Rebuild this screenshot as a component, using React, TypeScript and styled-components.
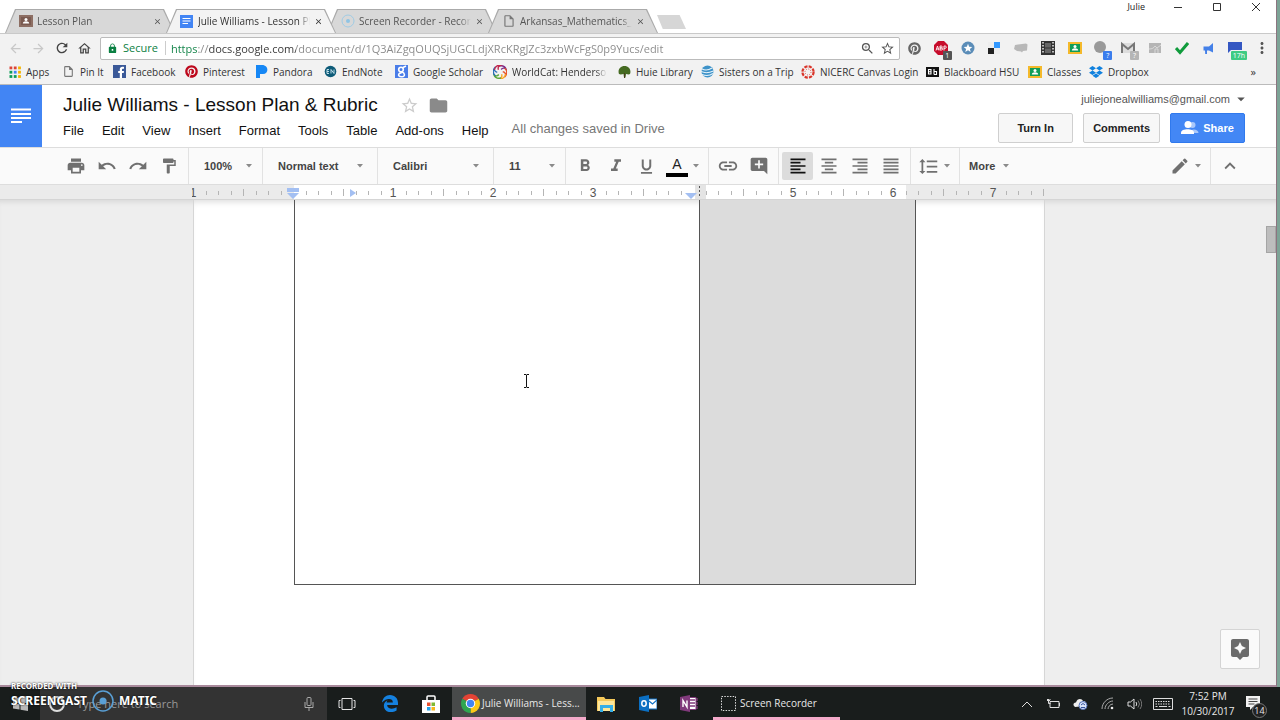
import React from "react";
import styled, { createGlobalStyle, css } from "styled-components";
import {
  MdAddComment, MdArrowDropDown, MdArrowBack, MdArrowForward, MdAssistant, MdClose,
  MdEdit, MdExpandLess, MdFolder, MdFormatAlignCenter, MdFormatAlignJustify, MdFormatAlignLeft,
  MdFormatAlignRight, MdFormatBold, MdFormatItalic, MdFormatLineSpacing, MdFormatPaint,
  MdFormatUnderlined, MdLink, MdLock, MdMoreVert, MdOutlineHome,
  MdOutlineInsertDriveFile, MdPrint, MdRedo, MdRefresh, MdStarBorder, MdUndo, MdZoomIn,
} from "react-icons/md";
import { FaDropbox, FaPinterest } from "react-icons/fa";

const ui = `"Open Sans", "Noto Sans", sans-serif`;
const arial = `"Liberation Sans", Arial, sans-serif`;

const GlobalStyle = createGlobalStyle`
  * { box-sizing: border-box; }
  body { margin: 0; background: #7da396; font-family: ${ui}; }
  button, input, select { font: inherit; color: inherit; margin: 0; padding: 0; border: 0; background: none; outline: none; }
  a { color: inherit; text-decoration: none; }
  svg { display: block; flex: none; }
`;

const Desktop = styled.div`
  position: relative;
  display: flex;
  flex-direction: column;
  min-height: 100vh;
`;
const Window = styled.div`
  flex: 1;
  display: flex;
  flex-direction: column;
  margin-right: 3px;
  border-right: 1px solid #8c7480;
  border-bottom: 2px solid #a98a9c;
  background: #fff;
`;

/* Tab strip */
const TabStrip = styled.div`
  display: flex;
  height: 33px;
  padding: 9px 0 0 5px;
`;
const Tabs = styled.div`
  display: flex;
  flex: 1;
`;
const slope = "polygon(10px 0, calc(100% - 11px) 0, 100% 100%, 0 100%)";
const TabBox = styled.div<{ $active?: boolean }>`
  position: relative;
  display: flex;
  align-items: center;
  gap: 4px;
  width: 170px;
  height: 24px;
  margin-right: -9px;
  padding: 0 13px 0 14px;
  background: #aaa;
  clip-path: ${slope};
  z-index: ${(p) => (p.$active ? 1 : 0)};
  color: ${(p) => (p.$active ? "#333" : "#555")};
  &::before {
    content: "";
    position: absolute;
    inset: 1px 1px 0 1px;
    clip-path: ${slope};
    background: ${(p) => (p.$active ? "#f3f3f3" : "#d8d8d8")};
  }
  > * { position: relative; }
`;
const TabTitle = styled.a`
  flex: 1;
  min-width: 0;
  overflow: hidden;
  white-space: nowrap;
  font-size: 10px;
  line-height: 16px;
  mask-image: linear-gradient(90deg, #000 90%, transparent);
`;
const CloseTab = styled.button`
  display: flex;
`;
const NewTab = styled.button`
  width: 29px;
  height: 14px;
  margin: 6px 0 0 8px;
  background: #d6d6d6;
  clip-path: polygon(0 0, 78% 0, 100% 100%, 20% 100%);
`;
const WindowControls = styled.div`
  display: flex;
  align-items: center;
  height: 14px;
  margin-top: -9px;
  padding-right: 14px;
  gap: 27px;
  button { display: flex; }
`;
const Profile = styled.button`
  font-size: 9px;
  line-height: 14px;
  color: #222;
`;

/* Address bar */
const AddressRow = styled.div`
  display: flex;
  align-items: center;
  height: 28px;
  padding: 1px 5px 0 4px;
  border-top: 1px solid #c9c9c9;
  background: #f2f2f2;
`;
const NavButton = styled.button<{ $off?: boolean }>`
  display: flex;
  justify-content: center;
  width: 23px;
  color: ${(p) => (p.$off ? "#c8c8c8" : "#444")};
`;
const Omnibox = styled.div`
  flex: 1;
  display: flex;
  align-items: center;
  height: 23px;
  margin: 0 6px 0 4px;
  padding: 0 4px 0 6px;
  gap: 5px;
  border: 1px solid #bbb;
  border-radius: 2px;
  background: #fff;
  color: #555;
`;
const Secure = styled.span`
  padding-right: 7px;
  border-right: 1px solid #ccc;
  font-size: 11px;
  line-height: 14px;
  color: #0b8043;
`;
const Url = styled.input`
  flex: 1;
  min-width: 0;
  height: 20px;
  font-size: 11px;
  -webkit-text-fill-color: transparent;
  background-image: linear-gradient(90deg, #0b8043 0 27px, #888 27px 38px, #333 38px 125px, #888 125px);
  -webkit-background-clip: text;
  background-clip: text;
`;
const IconButton = styled.button`
  display: flex;
`;
const Extensions = styled.div`
  display: flex;
  justify-content: space-between;
  width: 337px;
  margin-right: 10px;
`;
const Extension = styled.button`
  position: relative;
  display: flex;
  align-items: center;
  justify-content: center;
  width: 16px;
  height: 16px;
`;
const Badge = styled.span<{ $color: string; $wide?: boolean }>`
  position: absolute;
  right: ${(p) => (p.$wide ? "-4px" : "-3px")};
  bottom: -4px;
  min-width: 9px;
  padding: 0 2px;
  border-radius: 1px;
  font-size: 7px;
  line-height: 9px;
  color: #fff;
  background: ${(p) => p.$color};
`;

/* Bookmarks */
const Bookmarks = styled.nav`
  display: flex;
  align-items: center;
  height: 24px;
  padding: 0 20px 2px 9px;
  border-bottom: 1px solid #bbb;
  background: #f2f2f2;
`;
const Bookmark = styled.a<{ $w: number }>`
  display: flex;
  align-items: center;
  gap: 5px;
  width: ${(p) => p.$w}px;
  font-size: 10px;
  line-height: 16px;
  color: #333;
  white-space: nowrap;
`;
const Fade = styled.span`
  width: 95px;
  overflow: hidden;
  mask-image: linear-gradient(90deg, #000 88%, transparent);
`;
const More = styled.button`
  margin-left: auto;
  font-size: 11px;
  line-height: 16px;
  color: #333;
`;

/* Docs header */
const DocHeader = styled.header`
  display: flex;
  height: 63px;
  border-bottom: 1px solid #ddd;
  font-family: ${arial};
`;
const DocsHome = styled.a`
  display: flex;
  align-items: center;
  justify-content: center;
  width: 42px;
  background: #4285f4;
`;
const TitleArea = styled.div`
  flex: 1;
  padding: 8px 0 0 21px;
`;
const TitleRow = styled.div`
  display: flex;
  align-items: center;
  height: 24px;
`;
const DocTitle = styled.h1`
  margin: 0 22px 0 0;
  font-size: 19px;
  font-weight: 400;
  line-height: 24px;
  white-space: nowrap;
  color: #111;
`;
const StarButton = styled(IconButton)`
  margin-right: 9px;
  color: #ccc;
`;
const FolderButton = styled(IconButton)`
  color: #8a8a8a;
`;
const MenuRow = styled.nav`
  display: flex;
  gap: 18px;
  margin-top: 4px;
  font-size: 13px;
  line-height: 20px;
  color: #111;
  white-space: nowrap;
`;
const SaveState = styled.span`
  margin: -2px 0 0 5px;
  color: #777;
`;
const Account = styled.div`
  display: flex;
  flex-direction: column;
  align-items: flex-end;
  gap: 5px;
  padding: 5px 31px 0 0;
`;
const Email = styled.button`
  display: flex;
  align-items: center;
  font-size: 11px;
  line-height: 17px;
  gap: 2px;
  color: #555;
  svg { margin-right: -5px; }
`;
const Actions = styled.div`
  display: flex;
  gap: 10px;
`;
const Action = styled.button<{ $primary?: boolean }>`
  display: flex;
  align-items: center;
  justify-content: center;
  gap: 4px;
  min-width: 75px;
  height: 30px;
  padding: 0 9px;
  border: 1px solid ${(p) => (p.$primary ? "#3079ed" : "#cfcfcf")};
  border-radius: 2px;
  font-size: 11px;
  font-weight: 700;
  color: ${(p) => (p.$primary ? "#fff" : "#222")};
  background: ${(p) => (p.$primary ? "#4387f5" : "#f7f7f7")};
`;

/* Formatting toolbar */
const Toolbar = styled.div`
  display: flex;
  height: 37px;
  padding-left: 60px;
  border-bottom: 1px solid #ddd;
  background: #fafafa;
  font-family: ${arial};
  font-size: 11px;
  font-weight: 700;
  color: #444;
`;
const Group = styled.div<{ $first?: boolean; $end?: boolean }>`
  display: flex;
  align-items: center;
  padding: 0 4px 0 3px;
  ${(p) => !p.$first && css`border-left: 1px solid #e2e2e2;`}
  ${(p) => p.$first && css`padding-left: 0;`}
  ${(p) => p.$end && css`padding-right: 31px;`}
`;
const Tool = styled.button<{ $on?: boolean }>`
  display: flex;
  align-items: center;
  justify-content: center;
  width: 31px;
  height: 28px;
  border-radius: 2px;
  color: ${(p) => (p.$on ? "#111" : "#707070")};
  background: ${(p) => (p.$on ? "#dcdcdc" : "transparent")};
`;
const MenuTool = styled(Tool)`
  width: auto;
  padding: 0 5px 0 4px;
  gap: 5px;
`;
const MoreTool = styled(MenuTool)`
  gap: 8px;
  padding-left: 6px;
  color: #444;
`;
const Spacer = styled.div`
  flex: 1;
`;
const ArrowIcon = styled.svg`
  color: #8a8a8a;
`;
const Picker = styled.label<{ $w: number; $inset: number }>`
  display: grid;
  align-items: center;
  width: ${(p) => p.$w}px;
  padding-right: ${(p) => p.$inset}px;
  border-left: 1px solid #e2e2e2;
  select { grid-area: 1 / 1; appearance: none; width: 100%; height: 28px; padding-left: 15px; }
  svg { grid-area: 1 / 1; justify-self: end; pointer-events: none; }
`;
const TextColor = styled.span`
  width: 22px;
  border-bottom: 4px solid #000;
  font-size: 14px;
  font-weight: 400;
  line-height: 17px;
  text-align: center;
  color: #222;
`;

/* Ruler and page */
const RulerBar = styled.div`
  display: flex;
  justify-content: center;
  height: 15px;
  padding-right: 39px;
  border-bottom: 1px solid #d5d5d5;
  background: #ebebeb;
`;
const Workspace = styled.main`
  position: relative;
  flex: 1;
  display: flex;
  justify-content: center;
  padding-right: 38px;
  background: #eee;
  box-shadow: inset 0 5px 5px -3px #d8d8d8;
`;
const Paper = styled.article`
  width: 852px;
  padding: 0 0 100px 100px;
  border: solid #d6d6d6;
  border-width: 0 1px;
  background: #fff;
  background-clip: padding-box;
  box-shadow: inset 0 6px 6px -4px #ddd;
`;
const RubricTable = styled.table`
  width: 621px;
  height: 385px;
  table-layout: fixed;
  border-collapse: collapse;
`;
const Cell = styled.td<{ $shaded?: boolean }>`
  width: ${(p) => (p.$shaded ? 216 : 405)}px;
  padding: 0;
  border: solid #555;
  border-width: 0 1px 1px;
  background: ${(p) => (p.$shaded ? "#dcdcdc" : "transparent")};
`;
const ScrollThumb = styled.div`
  position: absolute;
  top: 26px;
  right: 0;
  width: 10px;
  height: 27px;
  border: 1px solid #a5a5a5;
  background: #bdbdbd;
`;
const Explore = styled.button`
  position: absolute;
  right: 16px;
  bottom: 16px;
  display: flex;
  align-items: center;
  justify-content: center;
  width: 40px;
  height: 40px;
  border: 1px solid #d4d4d4;
  border-radius: 2px;
  background: #fafafa;
  color: #6b6b6b;
`;
const Pointer = styled.svg`
  position: absolute;
  left: 523px;
  top: 174px;
`;

/* Taskbar */
const Taskbar = styled.footer`
  display: flex;
  height: 33px;
  background: #191d1c;
  color: #e8e8e8;
  font-size: 10px;
`;
const Start = styled.button`
  display: flex;
  align-items: center;
  justify-content: center;
  width: 40px;
`;
const Search = styled.label`
  display: flex;
  align-items: center;
  width: 287px;
  padding: 0 12px 0 8px;
  background: #333;
  input { flex: 1; min-width: 0; margin-left: 11px; font-size: 11px; }
  input::placeholder { color: #999; opacity: 1; }
`;
const TaskIcon = styled.button<{ $w?: number }>`
  display: flex;
  align-items: center;
  justify-content: center;
  width: ${(p) => p.$w ?? 41}px;
`;
const TaskItem = styled.button<{ $active?: boolean }>`
  display: flex;
  align-items: center;
  gap: ${(p) => (p.$active ? 2 : 3)}px;
  width: ${(p) => (p.$active ? 134 : 127)}px;
  margin-left: ${(p) => (p.$active ? 1 : 4)}px;
  padding: 2px 0 0 ${(p) => (p.$active ? 9 : 7)}px;
  border-bottom: 3px solid #f3a9c9;
  background: ${(p) => (p.$active ? "#484a4a" : "transparent")};
  white-space: nowrap;
`;
const Tray = styled.div`
  display: flex;
  align-items: center;
  margin-left: auto;
  padding-right: 16px;
`;
const TrayIcon = styled.button`
  display: flex;
  align-items: center;
  justify-content: center;
  width: 27px;
`;
const KeyboardButton = styled(TrayIcon)`
  width: 30px;
`;
const Clock = styled.time`
  width: 60px;
  line-height: 15px;
  text-align: center;
`;
const Notifications = styled.button`
  position: relative;
  display: flex;
  width: 26px;
  padding-left: 8px;
`;
const Count = styled.span`
  position: absolute;
  right: -3px;
  top: 7px;
  width: 15px;
  border: 1px solid #777;
  border-radius: 8px;
  background: #222;
  font-size: 9px;
  line-height: 13px;
  text-align: center;
`;

/* Recording mark */
const Watermark = styled.div`
  position: absolute;
  left: 11px;
  bottom: 8px;
  color: #fff;
  font-family: "Noto Sans", sans-serif;
  font-weight: 700;
  text-shadow: 0 0 2px #000;
  pointer-events: none;
`;
const MarkTop = styled.div`
  font-size: 8px;
  line-height: 8px;
`;
const MarkRow = styled.div`
  display: flex;
  align-items: center;
  gap: 5px;
  font-size: 12px;
  line-height: 22px;
`;

const Svg = ({ w = 14, h, box, children }: { w?: number; h?: number; box?: string; children: React.ReactNode }) => (
  <svg width={w} height={h ?? w} viewBox={box ?? `0 0 ${w} ${h ?? w}`} fill="none" aria-hidden="true">{children}</svg>
);

const Classroom = ({ brown }: { brown?: boolean }) => (
  <Svg>
    <path d="M0 1h14v12H0z" fill={brown ? "#8d6e63" : "#f4b92b"} />
    <path d="M2 3h10v8H2z" fill={brown ? "#7a5a50" : "#0f9d58"} />
    <circle cx="7" cy="5.6" r="1.5" fill="#fff" />
    <path d="M3.800 9.600c0-3 6.400-3 6.400 0z" fill="#fff" />
  </Svg>
);
const DocIcon = () => (
  <Svg><path d="M0 1h13v13H0z" fill="#4285f4" /><path d="M2.500 4.500h8M2.500 7h8M2.500 9.500h5.500" stroke="#fff" strokeWidth="1.200" /></Svg>
);
const RecorderIcon = () => (
  <Svg><circle cx="7" cy="7" r="6" stroke="#9fcbe4" /><circle cx="7" cy="7" r="2" fill="#8fc4e4" /></Svg>
);
const AppsIcon = () => (
  <Svg w={12}>
    {["#db4437", "#db4437", "#f4b400", "#0f9d58", "#4285f4", "#f4b400", "#0f9d58", "#0f9d58", "#f4b400"].map((c, i) => (
      <rect key={i} x={(i % 3) * 4.3 + 0.5} y={Math.floor(i / 3) * 4.3 + 0.5} width="2.800" height="2.800" fill={c} />
    ))}
  </Svg>
);
const FacebookIcon = () => (
  <Svg w={13}><path d="M0 0h13v13H0z" fill="#3b5998" /><path d="M9 13V8h1.700l.3-2H9V4.800c0-.7.3-1 1.100-1H11V2c-2.900-.5-4.200.5-4.200 2.600V6H5.200v2h1.600v5z" fill="#fff" /></Svg>
);
const PandoraIcon = () => (
  <Svg w={13}><path d="M1 0h6c7 0 7 9 1 9H5v4H1z" fill="#1687f5" /></Svg>
);
const EndNoteIcon = () => (
  <Svg w={13}><circle cx="6.500" cy="6.500" r="5.800" fill="#0d5b78" /><path d="M5 4.500H3v4h2M3 6.500h2M7 8.500v-4l3 4v-4" stroke="#cfe8f0" strokeWidth=".9" /></Svg>
);
const ScholarIcon = () => (
  <Svg w={13}><path d="M0 0h13v13H0z" fill="#4a7de8" /><circle cx="6" cy="4.500" r="2.300" stroke="#fff" strokeWidth="1.600" /><path d="M8 2.500 11 1M7 7c3 1 3.500 4.500 0 4.800-3 .2-4.500-2-2.500-3.300 1-.6 2-.7 2.500-1.500z" stroke="#fff" strokeWidth="1.500" /></Svg>
);
const WorldCatIcon = () => (
  <Svg w={14}>
    {["#7b2d8b", "#e8542c", "#f5a623", "#5aa83b", "#2a6fb8", "#c2264b"].map((c, i) => (
      <path key={c} d="M6 1C9.500.2 12 1.500 13 4 11.500 2.800 9.500 2.800 8.200 4.500" stroke={c} strokeWidth="1.400" transform={`rotate(${i * 60} 7 7)`} />
    ))}
  </Svg>
);
const TreeIcon = () => (
  <Svg w={13}><path d="M1 9C-.5 5 2 1 6.500 1S13.500 5 12 9c-1.500 1-2.500 0-4 0L7.500 12.500H6L5.500 9C4 9 3 10 1 9z" fill="#466b22" /><path d="M6.500 13V8" stroke="#4b3d21" /></Svg>
);
const GlobeIcon = () => (
  <Svg w={13}><circle cx="6.500" cy="6.500" r="6" fill="#3e93c9" /><path d="M1 4c3 1.500 7 1 10-1M0 6.500c4 2 8 1.500 12.500-.5M1 9.500c4 1.500 8 1 11-1" stroke="#e8f4fb" strokeWidth="1.100" /></Svg>
);
const CanvasIcon = () => (
  <Svg w={14}><circle cx="7" cy="7" r="5.600" stroke="#d9352a" strokeWidth="2.200" strokeDasharray="3.200 1.198" /><circle cx="7" cy="7" r="3" stroke="#d9352a" strokeWidth=".9" strokeDasharray=".9 1.456" /></Svg>
);
const BlackboardIcon = () => (
  <Svg w={13}><path d="M0 2h13v10H0z" fill="#111" /><path d="M2.500 4v5.500M2.500 4.500h2.500v4.500H2.500M2.500 6.700H5M8 4v5.500M8 6.500h2.500v3H8" stroke="#fff" strokeWidth="1.100" /></Svg>
);

const bookmarks: { label: string; w: number; icon: React.ReactNode; fade?: boolean }[] = [
  { label: "Apps", w: 53, icon: <AppsIcon /> },
  { label: "Pin It", w: 51, icon: <MdOutlineInsertDriveFile size={13} color="#777" /> },
  { label: "Facebook", w: 72, icon: <FacebookIcon /> },
  { label: "Pinterest", w: 70, icon: <FaPinterest size={13} color="#bd081c" /> },
  { label: "Pandora", w: 69, icon: <PandoraIcon /> },
  { label: "EndNote", w: 71, icon: <EndNoteIcon /> },
  { label: "Google Scholar", w: 98, icon: <ScholarIcon /> },
  { label: "WorldCat: Henderson", w: 125, icon: <WorldCatIcon />, fade: true },
  { label: "Huie Library", w: 83, icon: <TreeIcon /> },
  { label: "Sisters on a Trip", w: 100, icon: <GlobeIcon /> },
  { label: "NICERC Canvas Login", w: 125, icon: <CanvasIcon /> },
  { label: "Blackboard HSU", w: 102, icon: <BlackboardIcon /> },
  { label: "Classes", w: 61, icon: <Classroom /> },
  { label: "Dropbox", w: 70, icon: <FaDropbox size={14} color="#1081de" /> },
];

const tabs = [
  { title: "Lesson Plan", icon: <Classroom brown /> },
  { title: "Julie Williams - Lesson Pl", icon: <DocIcon />, active: true },
  { title: "Screen Recorder - Recor", icon: <RecorderIcon /> },
  { title: "Arkansas_Mathematics_S", icon: <MdOutlineInsertDriveFile size={14} color="#777" /> },
];

const extensions: { name: string; icon: React.ReactNode; badge?: string; color?: string; wide?: boolean }[] = [
  { name: "Pinterest", icon: <FaPinterest size={13} color="#666" /> },
  { name: "Adblock Plus", badge: "1", color: "#555", icon: <Svg w={14}><path d="M4 0h6l4 4v6l-4 4H4l-4-4V4z" fill="#c70d2c" /><path d="M2 9.500 3.500 5 5 9.500M2.500 8h2M6 5v4h1.500c1.500 0 1.500-2 0-2H6h1.300c1.300 0 1.300-2 0-2zM10 9.500V5h1.200c1.500 0 1.500 2.300 0 2.300H10" stroke="#fff" strokeWidth=".9" /></Svg> },
  { name: "Favorites", icon: <Svg w={14}><circle cx="7" cy="7" r="6.500" fill="#5b8db8" /><path d="m7 2.800 1.200 2.900 3.100.2-2.400 2 .8 3L7 9.300l-2.700 1.600.8-3-2.400-2 3.100-.2z" fill="#fff" /></Svg> },
  { name: "Delicious", icon: <Svg w={14}><path d="M7 1h6v6H7z" fill="#3399ff" /><path d="M1 7h6v6H1z" fill="#222" /><path d="M1 1h6v6H1zM7 7h6v6H7z" fill="#eee" /></Svg> },
  { name: "Notes", icon: <Svg w={14}><path d="m1 4 11-1.500 1.500 1-.5 6-4 .5-1 1.500L7 10.500 3 10 0 8z" fill="#b8b8b8" /></Svg> },
  { name: "Video", icon: <Svg w={14}><path d="M0 0h14v14H0z" fill="#333" /><path d="M2 1v12M12 1v12" stroke="#eee" strokeWidth="1.500" strokeDasharray="1.500 1.500" /><path d="M4 2h6v4.500H4zM4 7.500h6V12H4z" fill="#666" /></Svg> },
  { name: "Classroom", icon: <Classroom /> },
  { name: "Profile", badge: "?", color: "#3b7ded", icon: <Svg w={14}><circle cx="6" cy="6" r="6" fill="#999" /></Svg> },
  { name: "Mail", badge: "?", color: "#b5b5b5", icon: <Svg w={14}><path d="M0 2h14v10H0z" fill="#ddd" /><path d="M1 12V3l6 5 6-5v9" stroke="#777" strokeWidth="2" /></Svg> },
  { name: "Capture", icon: <Svg w={14}><path d="M1 2h12v10H1z" fill="#b5b5b5" /><path d="M1 8c3 0 5-1 6-3l2 2 4-3M7 12V8h3v4" stroke="#ddd" strokeWidth=".9" /></Svg> },
  { name: "Check", icon: <Svg w={14}><path d="m1 7 4 4.500L13 2" stroke="#109b3c" strokeWidth="3" /></Svg> },
  { name: "Announce", icon: <Svg w={14}><path d="M12 2v9.500L8 9.500H6V13H4.200L4 9.500H2.500v-4H8z" fill="#4480e8" /></Svg> },
  { name: "Timer", badge: "17h", color: "#3ecb83", wide: true, icon: <Svg w={14}><path d="M0 1h14v8H3l-3 3z" fill="#3457c2" /></Svg> },
];

const Arrow = () => (
  <ArrowIcon width="6" height="4" viewBox="0 0 6 4" aria-hidden="true"><path d="M0 0h6L3 3.500z" fill="currentColor" /></ArrowIcon>
);

const PickerField = ({ label, value, w, inset }: { label: string; value: string; w: number; inset: number }) => (
  <Picker $w={w} $inset={inset}>
    <select aria-label={label} defaultValue={value}><option>{value}</option></select>
    <Arrow />
  </Picker>
);

/* One hundred pixels to the inch, a tick at each eighth. */
const Ruler = () => {
  const ticks = Array.from({ length: 69 }, (_, i) => i);
  return (
    <svg width="853" height="14" viewBox="0 0 853 14" fontFamily="Liberation Sans, Arial, sans-serif" fontSize="12" fill="#555" role="img" aria-label="Ruler">
      <path d="M102 0h612v14H102z" fill="#fff" />
      <path d="M503 0h11v14h-11z" fill="#e4e4e4" />
      {ticks.map((i) => {
        const x = 1 + i * 12.5;
        if (i % 8 === 0) {
          const n = Math.abs(i / 8 - 1);
          return n === 0 || n === 4 ? null : <text key={i} x={x} y="12" textAnchor="middle">{n}</text>;
        }
        const long = i % 4 === 0;
        return <path key={i} d={`M${Math.round(x) + 0.5} ${long ? 4 : 6}v${long ? 7 : 4}`} stroke="#b5b5b5" />;
      })}
      <path d="M507.500 1v12" stroke="#555" strokeDasharray="2 2" />
      <path d="M95 3h12v4H95zM95 8h12l-6 6zM158 4l6 4-6 4zM493 8h12l-6 6z" fill="#a3bff2" />
    </svg>
  );
};

export default function App() {
  return (
    <Desktop>
      <GlobalStyle />
      <Window>
        <TabStrip>
          <Tabs>
            {tabs.map((t) => (
              <TabBox key={t.title} $active={t.active}>
                {t.icon}
                <TabTitle href="#">{t.title}</TabTitle>
                <CloseTab aria-label="Close tab"><MdClose size={9} /></CloseTab>
              </TabBox>
            ))}
            <NewTab aria-label="New tab" />
          </Tabs>
          <WindowControls>
            <Profile>Julie</Profile>
            <IconButton aria-label="Minimize"><Svg w={12}><path d="M2 6.500h8" stroke="#333" /></Svg></IconButton>
            <IconButton aria-label="Maximize"><Svg w={12}><path d="M2.500 2.500h7v7h-7z" stroke="#333" /></Svg></IconButton>
            <IconButton aria-label="Close"><Svg w={12}><path d="m2 2 8 8M10 2l-8 8" stroke="#333" /></Svg></IconButton>
          </WindowControls>
        </TabStrip>

        <AddressRow>
          <NavButton $off aria-label="Back"><MdArrowBack size={15} /></NavButton>
          <NavButton $off aria-label="Forward"><MdArrowForward size={15} /></NavButton>
          <NavButton aria-label="Reload"><MdRefresh size={16} /></NavButton>
          <NavButton aria-label="Home"><MdOutlineHome size={15} /></NavButton>
          <Omnibox>
            <MdLock size={11} color="#0b8043" />
            <Secure>Secure</Secure>
            <Url aria-label="Address" defaultValue="https://docs.google.com/document/d/1Q3AiZgqOUQSjUGCLdjXRcKRgJZc3zxbWcFgS0p9Yucs/edit" />
            <IconButton aria-label="Zoom"><MdZoomIn size={15} /></IconButton>
            <IconButton aria-label="Bookmark page"><MdStarBorder size={15} /></IconButton>
          </Omnibox>
          <Extensions>
            {extensions.map((e) => (
              <Extension key={e.name} aria-label={e.name}>
                {e.icon}
                {e.badge && <Badge $color={e.color!} $wide={e.wide}>{e.badge}</Badge>}
              </Extension>
            ))}
          </Extensions>
          <IconButton aria-label="Browser menu"><MdMoreVert size={18} color="#555" /></IconButton>
        </AddressRow>

        <Bookmarks>
          {bookmarks.map((b) => (
            <Bookmark key={b.label} href="#" $w={b.w}>
              {b.icon}
              {b.fade ? <Fade>{b.label}</Fade> : b.label}
            </Bookmark>
          ))}
          <More aria-label="More bookmarks">»</More>
        </Bookmarks>

        <DocHeader>
          <DocsHome href="#" aria-label="Docs home">
            <Svg w={20} h={16}><path d="M0 1.500h20M0 6h20M0 10h20M0 14h11" stroke="#fff" strokeWidth="2" /></Svg>
          </DocsHome>
          <TitleArea>
            <TitleRow>
              <DocTitle>Julie Williams - Lesson Plan &amp; Rubric</DocTitle>
              <StarButton aria-label="Star"><MdStarBorder size={19} /></StarButton>
              <FolderButton aria-label="Move to folder"><MdFolder size={21} /></FolderButton>
            </TitleRow>
            <MenuRow>
              {["File", "Edit", "View", "Insert", "Format", "Tools", "Table", "Add-ons", "Help"].map((m) => (
                <button key={m}>{m}</button>
              ))}
              <SaveState>All changes saved in Drive</SaveState>
            </MenuRow>
          </TitleArea>
          <Account>
            <Email>juliejonealwilliams@gmail.com <MdArrowDropDown size={18} /></Email>
            <Actions>
              <Action>Turn In</Action>
              <Action>Comments</Action>
              <Action $primary>
                <Svg w={18} h={16}><circle cx="11.500" cy="5" r="3" fill="#a9c8fb" /><path d="M9 13c0-5 8.500-4 8.500 0z" fill="#a9c8fb" /><circle cx="7" cy="4.500" r="3.500" fill="#fff" /><path d="M0 14v-1.500c0-4.500 13-4.500 13 0V14z" fill="#fff" /></Svg>
                Share
              </Action>
            </Actions>
          </Account>
        </DocHeader>

        <Toolbar role="toolbar">
          <Group $first>
            <Tool aria-label="Print"><MdPrint size={20} /></Tool>
            <Tool aria-label="Undo"><MdUndo size={20} /></Tool>
            <Tool aria-label="Redo"><MdRedo size={20} /></Tool>
            <Tool aria-label="Paint format"><MdFormatPaint size={18} /></Tool>
          </Group>
          <PickerField label="Zoom" value="100%" w={74} inset={10} />
          <PickerField label="Style" value="Normal text" w={115} inset={14} />
          <PickerField label="Font" value="Calibri" w={116} inset={14} />
          <PickerField label="Font size" value="11" w={72} inset={10} />
          <Group>
            <Tool aria-label="Bold"><MdFormatBold size={20} /></Tool>
            <Tool aria-label="Italic"><MdFormatItalic size={20} /></Tool>
            <Tool aria-label="Underline"><MdFormatUnderlined size={19} /></Tool>
            <MenuTool aria-label="Text color"><TextColor>A</TextColor><Arrow /></MenuTool>
          </Group>
          <Group>
            <Tool aria-label="Insert link"><MdLink size={22} /></Tool>
            <Tool aria-label="Add comment"><MdAddComment size={20} /></Tool>
          </Group>
          <Group>
            <Tool $on aria-label="Align left"><MdFormatAlignLeft size={20} /></Tool>
            <Tool aria-label="Align center"><MdFormatAlignCenter size={20} /></Tool>
            <Tool aria-label="Align right"><MdFormatAlignRight size={20} /></Tool>
            <Tool aria-label="Justify"><MdFormatAlignJustify size={20} /></Tool>
          </Group>
          <Group>
            <MenuTool aria-label="Line spacing"><MdFormatLineSpacing size={21} /><Arrow /></MenuTool>
          </Group>
          <Group>
            <MoreTool>More<Arrow /></MoreTool>
          </Group>
          <Spacer />
          <Group $first>
            <MenuTool aria-label="Editing mode"><MdEdit size={20} /><Arrow /></MenuTool>
          </Group>
          <Group $end>
            <Tool aria-label="Hide menus"><MdExpandLess size={22} /></Tool>
          </Group>
        </Toolbar>

        <RulerBar><Ruler /></RulerBar>

        <Workspace>
          <Paper>
            <RubricTable>
              <tbody><tr><Cell /><Cell $shaded /></tr></tbody>
            </RubricTable>
          </Paper>
          <Pointer width="7" height="14" viewBox="0 0 7 14" fill="none" aria-hidden="true">
            <path d="M1 .5h2l.5.500.5-.5h2M3.500 1v12M1 13.500h2l.5-.5.5.5h2" stroke="#111" />
          </Pointer>
          <ScrollThumb />
          <Explore aria-label="Explore"><MdAssistant size={24} /></Explore>
        </Workspace>
      </Window>

      <Taskbar>
        <Start aria-label="Start">
          <Svg w={15}><path d="M0 2.500 6.500 1.500V7H0zM7.500 1.300 15 0v7H7.500zM0 8h6.500v5.500L0 12.500zM7.500 8H15v7l-7.500-1.300z" fill="#b9b9b9" /></Svg>
        </Start>
        <Search>
          <Svg w={18}><circle cx="9" cy="9" r="7" stroke="#ddd" strokeWidth="2" /></Svg>
          <input aria-label="Search" placeholder="Type here to search" />
          <Svg w={12} h={14}><rect x="4" y=".5" width="4" height="8" rx="1" stroke="#aaa" /><path d="M2 5v5.500h8V5M6 11v3" stroke="#aaa" /></Svg>
        </Search>
        <TaskIcon $w={40} aria-label="Task view"><Svg w={18} h={14}><path d="M4 1.500h10v11H4zM2.500 3.500H1v7h1.500M15.500 3.500H17v7h-1.500" stroke="#e5e5e5" /></Svg></TaskIcon>
        <TaskIcon $w={44} aria-label="Edge"><Svg w={17} box="0 0 18 18"><path d="M1 8C2 3 5 0 9.500 0 15 0 18 4 18 8.500v2H6.500c.2 4.500 6 5 10 2.500v3.500C10 20 3 18 3 11.500c0-3 1.500-5 4-6-1 1-1 1.500-1 2.500h6.500C13 3.500 6 2.500 1 8z" fill="#1581df" /></Svg></TaskIcon>
        <TaskIcon $w={40} aria-label="Store"><Svg w={18}><path d="M0 5h18v13H0z" fill="#fff" /><path d="M5 5V2q0-1 1-1h6q1 0 1 1v3" stroke="#fff" strokeWidth="1.500" /><path d="M5 7.500h3.500V11H5z" fill="#e8502f" /><path d="M9.500 7.500H13V11H9.500z" fill="#7fb932" /><path d="M5 12h3.500v3.500H5z" fill="#22a2e8" /><path d="M9.500 12H13v3.500H9.500z" fill="#f7b71d" /></Svg></TaskIcon>
        <TaskItem $active>
          <Svg w={19} box="0 0 20 20">
            <path d="M10 10 1.340 5A10 10 0 0 1 18.660 5z" fill="#e44335" />
            <path d="M10 10 18.660 5A10 10 0 0 1 10 20z" fill="#fbc818" />
            <path d="M10 10v10A10 10 0 0 1 1.340 5z" fill="#2fa550" />
            <circle cx="10" cy="10" r="5" fill="#fff" /><circle cx="10" cy="10" r="3.900" fill="#4285f4" />
          </Svg>
          Julie Williams - Less...
        </TaskItem>
        <TaskIcon aria-label="File Explorer"><Svg w={19} h={16}><path d="M0 1h7l1.500 2H18v12H0z" fill="#f5c95a" /><path d="M1 5h16v10H1z" fill="#fde69a" /><path d="M3 16V9h13v7h-3v-4H6v4z" fill="#35aee6" /></Svg></TaskIcon>
        <TaskIcon aria-label="Outlook"><Svg w={18} h={17}><path d="M9 4h9v10H9z" fill="#fff" stroke="#1173c7" /><path d="m10 6 3.500 3L18 5" stroke="#1173c7" strokeWidth="1.200" /><path d="M0 2 10 0v17L0 15z" fill="#0b6fc2" /><ellipse cx="5" cy="8.500" rx="2.200" ry="2.700" stroke="#fff" strokeWidth="1.500" /></Svg></TaskIcon>
        <TaskIcon aria-label="OneNote"><Svg w={18} h={17}><path d="M9 2.500h7v12H9z" fill="#fff" stroke="#80397b" /><path d="M10 5h5M10 8h5M10 11h5M17 3v3M17 7v3M17 11v3" stroke="#80397b" strokeWidth="1.300" /><path d="M0 2 10 0v17L0 15z" fill="#80397b" /><path d="M3 12V5.500L7 12V5.500" stroke="#fff" strokeWidth="1.400" /></Svg></TaskIcon>
        <TaskItem>
          <Svg w={17}><path d="M1.500 1.500h14v14h-14z" stroke="#ddd" strokeDasharray="1.500 1.300" /></Svg>
          Screen Recorder
        </TaskItem>
        <Tray>
          <TrayIcon aria-label="Show hidden icons"><Svg w={12} h={8}><path d="m1 7 5-5 5 5" stroke="#ddd" /></Svg></TrayIcon>
          <TrayIcon aria-label="Power"><Svg w={15} h={11}><path d="M4 3.500h9v6H4zM13.500 5v3M1 2.500h3M2.500 1v4.500h2M1.500 1v1M4 1v1" stroke="#ddd" /></Svg></TrayIcon>
          <TrayIcon aria-label="OneDrive"><Svg w={15} h={13}><path d="M2 10c-3-2-1-5 1-4.500C4 1 9 1 10 4c3-.5 4 3 2 5z" fill="#eee" /><circle cx="10" cy="8.500" r="4" fill="#d9e4fa" stroke="#5270b8" /><path d="m8 8 2-1.500L12 8M8 10.500h4" stroke="#33519b" /></Svg></TrayIcon>
          <TrayIcon aria-label="Network"><Svg w={13}><path d="M1 12C1 6 6 1 12 1M4 12c0-4 4-8 8-8M7 12c0-2 2-5 5-5" stroke="#aaa" /><circle cx="11" cy="11" r="1.300" fill="#eee" /></Svg></TrayIcon>
          <TrayIcon aria-label="Volume"><Svg w={15} h={12}><path d="M1 4h2.500L7 1v10L3.500 8H1z" stroke="#ddd" /><path d="M9 4q1.500 2 0 4" stroke="#ddd" /><path d="M11 2.500q3 3.500 0 7M13 1q3.500 5 0 10" stroke="#777" /></Svg></TrayIcon>
          <KeyboardButton aria-label="Keyboard"><Svg w={20} h={12}><path d="M.5.5h19v11H.5z" stroke="#ddd" /><path d="M2.500 3.500h15M2.500 6h15" stroke="#ddd" strokeDasharray="1.500 1" /><path d="M2.500 8.500h2M6 8.500h8M15.500 8.500h2" stroke="#ddd" /></Svg></KeyboardButton>
          <Clock>7:52 PM<br />10/30/2017</Clock>
          <Notifications aria-label="Notifications">
            <Svg w={14} h={15}><path d="M0 0h14v11H7l-3 3v-3H0z" fill="#f2f2f2" /><path d="M2.500 3h9M2.500 5.500h9M2.500 8h6" stroke="#444" /></Svg>
            <Count>14</Count>
          </Notifications>
        </Tray>
      </Taskbar>

      <Watermark>
        <MarkTop>RECORDED WITH</MarkTop>
        <MarkRow>
          SCREENGAST
          <Svg w={22}><circle cx="11" cy="11" r="10" stroke="#5aa0d6" strokeWidth="1.500" /><circle cx="11" cy="11" r="3.500" fill="#5aa0d6" /></Svg>
          MATIC
        </MarkRow>
      </Watermark>
    </Desktop>
  );
}
